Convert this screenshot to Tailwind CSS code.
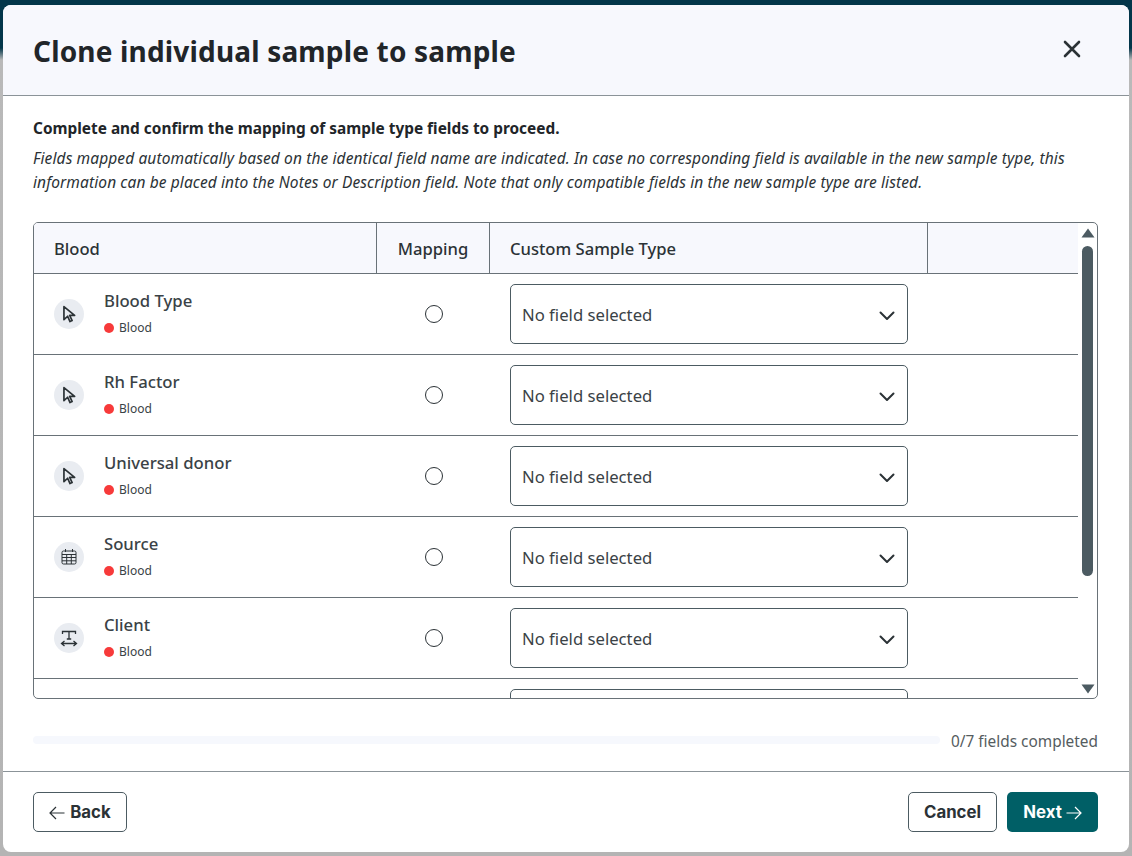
<!DOCTYPE html>
<html lang="en">
<head>
  <meta charset="UTF-8" />
  <meta name="viewport" content="width=device-width, initial-scale=1.0" />
  <title>Clone individual sample to sample</title>
  <script src="https://cdn.jsdelivr.net/npm/@tailwindcss/browser@4"></script>
</head>
<body class="h-[856px] overflow-hidden bg-[linear-gradient(to_bottom,#03364a_0px,#03364a_48px,#b9b9b9_60px,#b4b4b4_100%)] px-[3px] pt-[5px] pb-[4px] font-['Noto_Sans',sans-serif] text-[#2b3236]">
  <div class="flex h-[847px] flex-col overflow-hidden rounded-lg bg-white">
    <!-- header -->
    <div class="flex h-[91px] shrink-0 items-center justify-between border-b border-[#8b9398] bg-[#f7f8fd] pr-[48px] pl-[30px]">
      <h1 class="mt-[2px] text-[28px] leading-[38px] font-bold tracking-[0.17px] text-[#212529]">Clone individual sample to sample</h1>
      <svg class="mb-[2px] h-[18px] w-[18px]" viewBox="0 0 18 18" fill="none" stroke="#2b3236" stroke-width="2.6" stroke-linecap="round"><path d="M2 2l14 14M16 2L2 16" /></svg>
    </div>

    <div class="flex min-h-0 flex-1 flex-col pr-[31px] pl-[30px]">
      <p class="mt-[23px] text-[15.4px] leading-[20px] font-bold text-[#212529]">Complete and confirm the mapping of sample type fields to proceed.</p>
      <p class="mt-[7px] text-[15.5px] leading-[24px] tracking-[0.11px] text-[#2b3236] italic">Fields mapped automatically based on the identical field name are indicated. In case no corresponding field is available in the new sample type, this information can be placed into the Notes or Description field. Note that only compatible fields in the new sample type are listed.</p>

      <!-- mapping table -->
      <div class="mt-[28px] flex h-[477px] shrink-0 overflow-hidden rounded-[5px] border border-[#697278]">
        <div class="min-w-0 flex-1 overflow-hidden">
          <div class="flex h-[51px] border-b border-[#697278] bg-[#f7f8fd] text-[16.6px] font-medium text-[#2b3236]">
            <div class="flex w-[343px] items-center border-r border-[#697278] pt-[2px] pl-[20px]">Blood</div>
            <div class="flex w-[113px] items-center justify-center border-r border-[#697278] pt-[2px]">Mapping</div>
            <div class="flex w-[438px] items-center border-r border-[#697278] pt-[2px] pl-[20px]">Custom Sample Type</div>
            <div class="flex-1"></div>
          </div>
          <div id="rows"></div>
        </div>
        <!-- scrollbar -->
        <div class="flex w-[19px] shrink-0 flex-col items-center pt-[5px]">
          <svg class="h-[10px] w-[14px]" viewBox="0 0 14 10" fill="#4c5b62"><path d="M7 0.5L13.5 9.5H0.5z" /></svg>
          <div class="mt-[8px] h-[330px] w-[11px] rounded-full bg-[#4c5b62]"></div>
          <svg class="mt-[108px] h-[10px] w-[14px]" viewBox="0 0 14 10" fill="#4c5b62"><path d="M0.5 0.5H13.5L7 9.5z" /></svg>
        </div>
      </div>

      <!-- progress -->
      <div class="mt-[32px] flex h-[20px] items-center justify-between">
        <div class="mb-[2px] h-[8px] w-[907px] rounded-full bg-[#f6f8fd]"></div>
        <span class="mt-[2px] text-[15.4px] leading-[20px] text-[#555c60]">0/7 fields completed</span>
      </div>
    </div>

    <!-- footer -->
    <div class="flex h-[81px] shrink-0 items-center justify-between border-t border-[#8b9398] pr-[31px] pl-[30px] font-['Inter',sans-serif] text-[16.8px] font-bold">
      <button class="flex h-[40px] w-[94px] items-center justify-center gap-[5px] rounded-[5px] border border-[#4c5b62] bg-white pt-[1px] text-[#2b3236]">
        <svg class="h-[14px] w-[16px]" viewBox="0 0 16 14" fill="none" stroke="#2b3236" stroke-width="1.2"><path d="M15.5 7H1M7 1L1 7l6 6" /></svg>
        Back
      </button>
      <div class="flex gap-[10px]">
        <button class="h-[40px] w-[89px] rounded-[5px] border border-[#4c5b62] bg-white pt-[1px] text-[#2b3236]">Cancel</button>
        <button class="flex h-[40px] w-[91px] items-center justify-center gap-[4px] rounded-[5px] bg-[#005f66] pt-[1px] text-white">
          Next
          <svg class="h-[14px] w-[16px]" viewBox="0 0 16 14" fill="none" stroke="#ffffff" stroke-width="1.2"><path d="M0.5 7H15M9 1l6 6-6 6" /></svg>
        </button>
      </div>
    </div>
  </div>

  <script>
    const cursorIcon = '<svg class="h-[18px] w-[18px]" viewBox="0 0 16 16" fill="none" stroke="#2b3236" stroke-width="1.5" stroke-linejoin="round"><path d="M3.5 1.5L13 9.2H8.6l2.2 4.6-1.9.9-2.1-4.7-3.3 3z" /></svg>';
    const calendarIcon = '<svg class="h-[18px] w-[18px]" viewBox="0 0 18 18" fill="none" stroke="#2b3236" stroke-width="1"><rect x="2" y="3" width="14" height="13" rx="1.5" /><path d="M5.5 1v3M12.5 1v3M2 6.5h14M2 9.5h14M2 12.8h14M6.7 6.5V16M11.3 6.5V16" /></svg>';
    const textIcon = '<svg class="h-[18px] w-[18px]" viewBox="0 0 18 18" fill="none" stroke="#2b3236" stroke-width="1.3"><path d="M2.5 5V2.5h13V5M9 2.5V10M6.8 10h4.4M1.5 14.5h15M4.5 12l-3 2.5 3 2.5M13.5 12l3 2.5-3 2.5" /></svg>';

    const fields = [
      { name: "Blood Type", icon: cursorIcon },
      { name: "Rh Factor", icon: cursorIcon },
      { name: "Universal donor", icon: cursorIcon },
      { name: "Source", icon: calendarIcon },
      { name: "Client", icon: textIcon },
      { name: "", icon: "" }
    ];

    document.getElementById("rows").innerHTML = fields.map(f => `
      <div class="flex h-[81px] border-b border-[#697278]">
        <div class="flex w-[343px] items-center pl-[20px]">
          ${f.name ? `<span class="flex h-[30px] w-[30px] items-center justify-center rounded-full bg-[#e9ecf1]">${f.icon}</span>
          <div class="mb-[5px] ml-[20px]">
            <div class="text-[16.7px] leading-[26px] font-medium text-[#3a4246]">${f.name}</div>
            <div class="mt-[6px] flex items-center gap-[5px] text-[12px] leading-[16px] text-[#3a4246]"><span class="h-[10px] w-[10px] rounded-full bg-[#f73a3a]"></span>Blood</div>
          </div>` : ""}
        </div>
        <div class="flex w-[113px] items-center justify-center">
          ${f.name ? `<span class="h-[18px] w-[18px] rounded-full border-[1.5px] border-[#2b3236]"></span>` : ""}
        </div>
        <div class="pt-[10px] pl-[20px]">
          <div class="flex h-[60px] w-[398px] items-center justify-between rounded-[5px] border border-[#4c5b62] bg-white pt-[1px] pr-[12px] pl-[11px] text-[16.7px] text-[#3a4246]">
            ${f.name ? "No field selected" : ""}
            <svg class="mt-[2px] h-[10px] w-[16px]" viewBox="0 0 16 10" fill="none" stroke="#2b3236" stroke-width="2" stroke-linecap="round" stroke-linejoin="round"><path d="M1.5 1.5L8 8l6.5-6.5" /></svg>
          </div>
        </div>
      </div>`).join("");
  </script>
</body>
</html>
